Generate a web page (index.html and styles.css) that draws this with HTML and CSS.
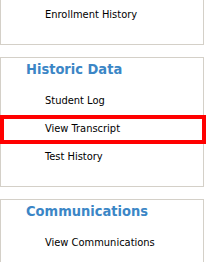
FILE: index.html
```html
<!DOCTYPE html>
<html>
<head>
<meta charset="utf-8">
<link rel="stylesheet" href="styles.css">
</head>
<body>
<div class="panel panel-cut">
  <ul class="links">
    <li class="link">Enrollment History</li>
  </ul>
</div>
<div class="panel">
  <h2 class="panel-title">Historic Data</h2>
  <ul class="links">
    <li class="link">Student Log</li>
    <li class="link link-highlight">View Transcript</li>
    <li class="link">Test History</li>
  </ul>
</div>
<div class="panel">
  <h2 class="panel-title">Communications</h2>
  <ul class="links">
    <li class="link">View Communications</li>
  </ul>
</div>
</body>
</html>
```
FILE: styles.css
```css
html, body {
  margin: 0;
  padding: 0;
  background: #ffffff;
}
body {
  font-family: "DejaVu Sans Condensed", "DejaVu Sans", sans-serif;
  color: #000000;
  overflow: hidden;
}
.panel {
  box-sizing: border-box;
  width: 204px;
  border: 1px solid #d4d0c8;
  padding-bottom: 15px;
  margin-bottom: 12px;
  background: #ffffff;
}
.panel-cut {
  border-top: none;
  padding-top: 1px;
}
.panel-title {
  margin: 0;
  padding-left: 25px;
  height: 23px;
  line-height: 23px;
  font-size: 14.5px;
  font-weight: bold;
  color: #3b86c6;
}
.links {
  list-style: none;
  margin: 0;
  padding: 6px 0 0 0;
}
.panel-cut .links {
  padding-top: 0;
}
.link {
  position: relative;
  height: 28px;
  line-height: 28px;
  padding-left: 44px;
  font-size: 11px;
}
.link-highlight::after {
  content: "";
  position: absolute;
  top: 0;
  left: -1px;
  right: -3px;
  bottom: -1px;
  border: 4px solid #ff0000;
}
```
